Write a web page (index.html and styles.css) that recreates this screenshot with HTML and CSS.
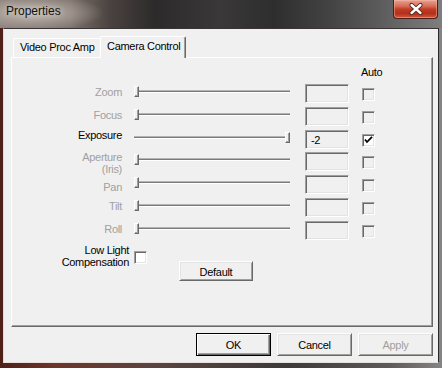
FILE: index.html
```html
<!DOCTYPE html>
<html>
<head>
<meta charset="utf-8">
<title>Properties</title>
<link rel="stylesheet" href="styles.css">
</head>
<body>
<div class="window">
  <div class="titlebar">
    <span class="title">Properties</span>
    <div class="close">
      <svg width="43" height="18" viewBox="0 0 43 18">
        <path d="M17.5 5 L26.5 13 M26.5 5 L17.5 13" stroke="#4a2018" stroke-width="4.2" stroke-linecap="round"/>
        <path d="M17.5 5 L26.5 13 M26.5 5 L17.5 13" stroke="#ffffff" stroke-width="2.4" stroke-linecap="round"/>
      </svg>
    </div>
  </div>
  <div class="frame">
    <div class="client">
      <div class="tabs">
        <div class="tab">Video Proc Amp</div>
        <div class="tab active">Camera Control</div>
      </div>
      <div class="panel">
        <div class="grid">
          <div class="auto">Auto</div>

          <div class="lbl">Zoom</div>
          <div class="slider"><div class="thumb"></div></div>
          <div class="edit"></div>
          <div class="chk"></div>

          <div class="lbl">Focus</div>
          <div class="slider"><div class="thumb"></div></div>
          <div class="edit"></div>
          <div class="chk"></div>

          <div class="lbl en hi">Exposure</div>
          <div class="slider end"><div class="thumb"></div></div>
          <div class="edit">-2</div>
          <div class="chk on">
            <svg width="11" height="11" viewBox="0 0 11 11"><path d="M2 4.5 L4 7 L9 1.8" fill="none" stroke="#000" stroke-width="1.8"/></svg>
          </div>

          <div class="lbl hi">Aperture<br>(Iris)</div>
          <div class="slider"><div class="thumb"></div></div>
          <div class="edit"></div>
          <div class="chk"></div>

          <div class="lbl lo">Pan</div>
          <div class="slider"><div class="thumb"></div></div>
          <div class="edit"></div>
          <div class="chk"></div>

          <div class="lbl">Tilt</div>
          <div class="slider"><div class="thumb"></div></div>
          <div class="edit"></div>
          <div class="chk"></div>

          <div class="lbl">Roll</div>
          <div class="slider"><div class="thumb"></div></div>
          <div class="edit"></div>
          <div class="chk"></div>

          <div class="lbl en low">Low Light<br>Compensation</div>
          <div class="chk white lowchk"></div>
          <div class="btn default">Default</div>
        </div>
      </div>
      <div class="buttons">
        <div class="btn big primary">OK</div>
        <div class="btn big">Cancel</div>
        <div class="btn big disabled">Apply</div>
      </div>
    </div>
  </div>
</div>
</body>
</html>
```
FILE: styles.css
```css
html, body {
  margin: 0;
  padding: 0;
}
body {
  width: 442px;
  height: 368px;
  overflow: hidden;
  font-family: "Liberation Sans", Arial, sans-serif;
  font-size: 11px;
  letter-spacing: -0.3px;
  color: #000;
}
.window {
  width: 442px;
  height: 368px;
  display: flex;
  flex-direction: column;
  background: linear-gradient(90deg, #4e2018 0%, #6e3428 12%, #5a4440 35%, #3c3a3a 65%, #5a5a5a 88%, #858585 100%);
}
.titlebar {
  height: 28px;
  flex: none;
  display: flex;
  justify-content: space-between;
  align-items: flex-start;
  background:
    radial-gradient(ellipse 70px 18px at 34px 13px, rgba(205,198,192,0.85), rgba(205,198,192,0) 100%),
    linear-gradient(90deg, #8a7e78 0%, #7c706a 16%, #4a4240 25%, #2c2a2a 35%, #3a3838 50%, #2e2e2e 62%, #444 75%, #5c5c5c 86%, #7e7e7e 100%);
}
.title {
  margin: 4px 0 0 6px;
  font-size: 12px;
  line-height: 14px;
  letter-spacing: 0;
  color: #101010;
  text-shadow: 0 0 6px rgba(240,236,230,0.9);
}
.close {
  width: 45px;
  height: 19px;
  margin-right: 4px;
  box-sizing: border-box;
  border: 1px solid #48201a;
  border-top: none;
  border-radius: 0 0 4px 4px;
  background: linear-gradient(#e6a394 0%, #d76a54 35%, #c23a22 52%, #b3301c 75%, #d4583c 100%);
  box-shadow: inset 0 0 0 1px rgba(255,190,175,0.45);
  display: flex;
  justify-content: center;
}
.close svg { display: block; }
.frame {
  flex: 1;
  display: flex;
  padding: 0 3px 5px 3px;
}
.client {
  flex: 1;
  display: flex;
  flex-direction: column;
  background: #f0f0f0;
  border: 1px solid;
  border-color: #3a3434 #2a2a2a #e8e0dc #e4d8d4;
  padding: 7px 5px 6px 7px;
}
.tabs {
  height: 21px;
  display: flex;
  align-items: flex-end;
  padding-left: 2px;
  position: relative;
  z-index: 1;
}
.tab {
  box-sizing: border-box;
  height: 19px;
  width: 87px;
  padding-left: 6px;
  line-height: 17px;
  border-left: 1px solid #fff;
  border-top: 1px solid #fff;
  border-radius: 2px 2px 0 0;
  background: #f0f0f0;
  white-space: nowrap;
}
.tab.active {
  height: 22px;
  width: 86px;
  margin-bottom: -1px;
  padding-left: 6px;
  line-height: 18px;
  border-right: 1px solid #696969;
  box-shadow: inset -1px 0 0 #a0a0a0;
}
.panel {
  flex: 1;
  border: 1px solid;
  border-color: #fff #696969 #696969 #fff;
  box-shadow: inset -1px -1px 0 #a0a0a0;
  padding-top: 8px;
}
.grid {
  display: grid;
  grid-template-columns: 122px 171px 57px 13px;
  grid-template-rows: 18px 23px 23px 22px 23px 23px 23px 23px 17px 20px;
}
.auto {
  grid-column: 4;
  margin-left: -1px;
  line-height: 13px;
  white-space: nowrap;
}
.lbl {
  text-align: right;
  padding-right: 12px;
  padding-top: 2px;
  line-height: 13px;
  color: #a0a0a0;
  white-space: nowrap;
}
.lbl.en { color: #000; }
.lbl.hi { padding-top: 0; margin-top: -1px; line-height: 12px; }
.lbl.lo { padding-top: 6px; }
.lbl.low {
  grid-row: span 2;
  padding-top: 0;
  padding-right: 5px;
  line-height: 12px;
}
.slider {
  width: 156px;
  height: 11px;
  margin-top: 2px;
  display: flex;
  background: linear-gradient(to bottom, transparent 4px, #b4b4b4 4px, #b4b4b4 5px, #7a7a7a 5px, #7a7a7a 6px, #ffffff 6px, #ffffff 7px, transparent 7px);
}
.slider.end { justify-content: flex-end; }
.thumb {
  box-sizing: border-box;
  width: 5px;
  height: 11px;
  border: 1px solid;
  border-color: #fff #696969 #696969 #fff;
  box-shadow: inset -1px -1px 0 #a0a0a0;
  background: #f0f0f0;
}
.edit {
  box-sizing: border-box;
  width: 44px;
  height: 19px;
  border: 1px solid;
  border-color: #a0a0a0 #fff #fff #a0a0a0;
  box-shadow: inset 1px 1px 0 #696969, inset -1px -1px 0 #e3e3e3;
  background: #f0f0f0;
  padding: 2px 0 0 5px;
  line-height: 15px;
}
.chk {
  box-sizing: border-box;
  width: 13px;
  height: 13px;
  margin-top: 4px;
  border: 1px solid;
  border-color: #a0a0a0 #fff #fff #a0a0a0;
  box-shadow: inset 1px 1px 0 #696969, inset -1px -1px 0 #e3e3e3;
  background: #f0f0f0;
}
.chk.on, .chk.white { background: #fff; }
.chk svg { display: block; }
.lowchk { margin-top: 7px; }
.btn {
  box-sizing: border-box;
  border: 1px solid;
  border-color: #fff #696969 #696969 #fff;
  box-shadow: inset 1px 1px 0 #e3e3e3, inset -1px -1px 0 #a0a0a0;
  background: #f0f0f0;
  display: flex;
  align-items: center;
  justify-content: center;
}
.btn.default {
  grid-column: 2;
  width: 74px;
  height: 20px;
  margin-left: 45px;
  padding-top: 1px;
}
.buttons {
  margin-top: 6px;
  display: flex;
  justify-content: flex-end;
  gap: 6px;
}
.btn.big {
  width: 75px;
  height: 23px;
}
.btn.primary {
  border-color: #000;
  box-shadow: inset 1px 1px 0 #fff, inset -1px -1px 0 #696969, inset -2px -2px 0 #a0a0a0;
}
.btn.disabled { color: #a0a0a0; }
```
